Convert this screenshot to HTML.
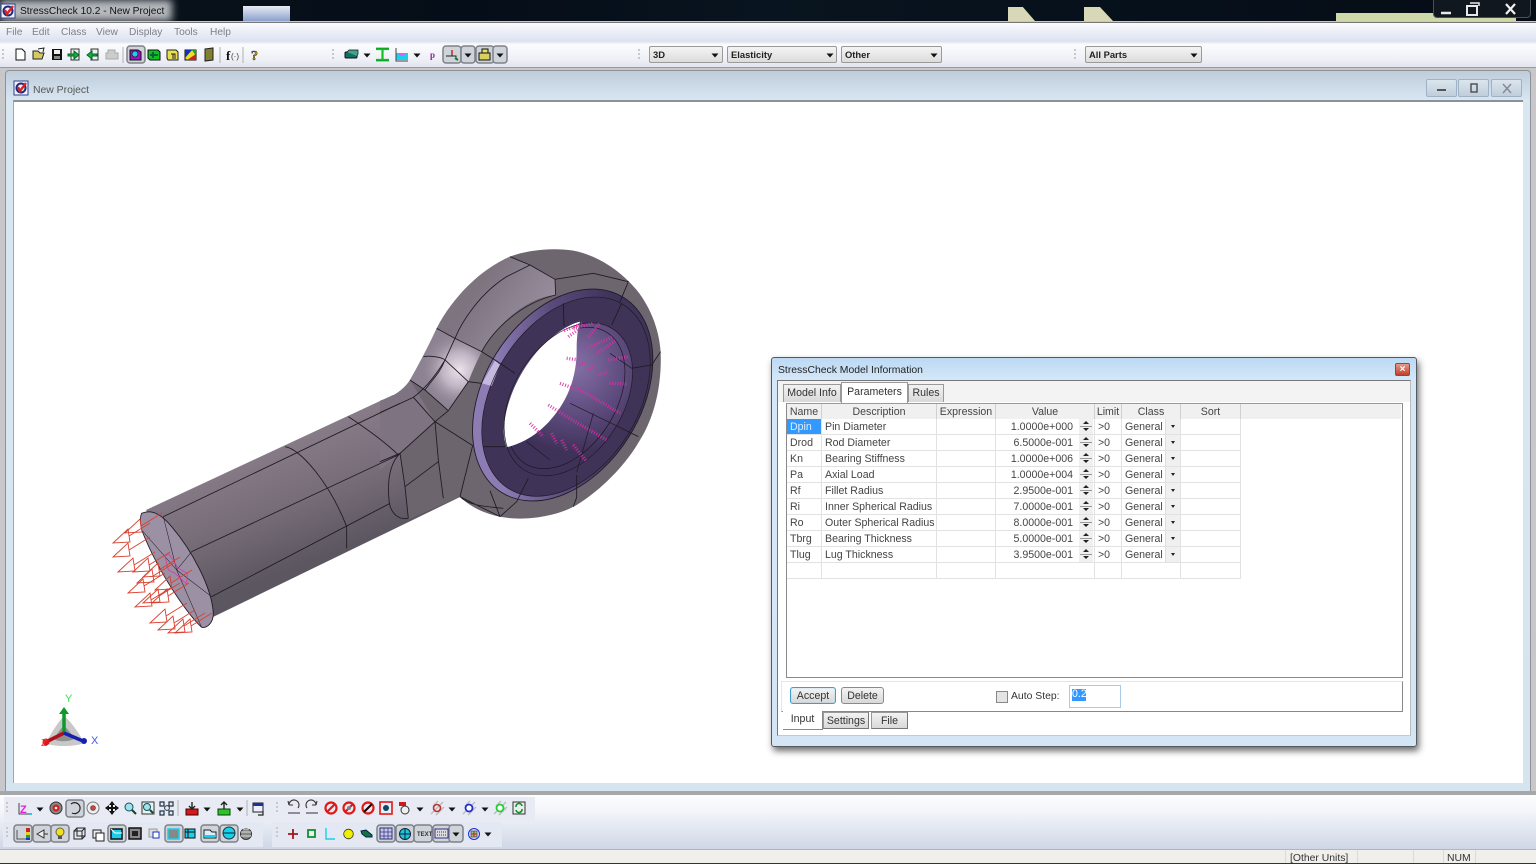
<!DOCTYPE html>
<html lang="en">
<head>
<meta charset="utf-8">
<title>StressCheck 10.2 - New Project</title>
<style>
html,body{margin:0;padding:0;background:#c8c8ca}
body{width:1536px;height:864px;overflow:hidden;position:relative;font-family:"Liberation Sans",sans-serif;font-size:11px;color:#333}
#root{position:absolute;left:0;top:0;width:1536px;height:864px;overflow:hidden;filter:blur(.35px)}
.a{position:absolute}
#top{left:0;top:0;width:1536px;height:21px;background:linear-gradient(90deg,#0a121c,#050d18 30%,#08141f 50%,#050c16)}
#menu{left:0;top:22px;width:1536px;height:20px;background:linear-gradient(#fbfcfe 0,#f2f4fa 25%,#dce1f0 100%);border-top:1px solid #777;box-sizing:border-box}
#menu span{position:absolute;top:3.500px;color:#7f8288;font-size:10.2px}
#tb{left:0;top:42px;width:1536px;height:26px;background:linear-gradient(#e6e8ee 0,#fbfcfe 10%,#eef0f6 70%,#e2e5ee 100%);border-bottom:1px solid #9a9a9a;box-sizing:border-box}
.dd{position:absolute;top:46px;height:17px;box-sizing:border-box;border:1px solid #9a9a9a;border-radius:2px;background:linear-gradient(#f4f4f4,#dcdcdc);font-weight:bold;font-size:9.4px;color:#222;line-height:16px;padding-left:3px}
#mdi{left:5px;top:70px;width:1526px;height:723px;box-sizing:border-box;border-radius:4px 4px 0 0;border:1px solid #8e9296;background:linear-gradient(#bfccda 0,#d9e7f3 30px,#d6e4f0 100%)}
#cv{left:13px;top:100px;width:1510px;height:683px;background:#fff;border-top:2px solid #8b9196;border-left:1px solid #9aa;box-sizing:border-box}
.mb{position:absolute;top:79px;height:18px;width:31px;box-sizing:border-box;border:1px solid #9fb2c6;border-radius:2px;background:linear-gradient(#dbe5ee,#c0cedb)}
#bt{left:0;top:795px;width:1536px;height:54px;background:linear-gradient(#fdfdfe 0,#f3f5fa 30%,#cfd6e6 100%)}
#st{left:0;top:849px;width:1536px;height:14px;background:#f1efeb;border-top:1px solid #b5b5b5;box-sizing:border-box}
#st i{position:absolute;top:0;bottom:0;width:1px;background:#dcdad5}
#st span{position:absolute;top:3px;font-size:10.4px;color:#333;white-space:nowrap}
#dlg{left:771px;top:357px;width:646px;height:390px;box-sizing:border-box;border:1px solid #55595e;border-radius:3px;background:linear-gradient(#bcd9f3 0,#d4e7f8 22px,#d4e6f6 100%);box-shadow:2px 4px 7px rgba(30,30,30,.65)}
#dt{left:6px;top:7px;font-size:10.4px;color:#222}
#dx{left:623px;top:5px;width:15px;height:13px;box-sizing:border-box;border:1px solid #8a4a40;border-radius:2px;background:linear-gradient(#e89a88,#c0402c);color:#fff;font-size:10px;line-height:11px;text-align:center;font-weight:bold}
#db{left:5px;top:22px;width:634px;height:356px;box-sizing:border-box;background:#f3f3f3;border:1px solid #777;border-bottom-color:#c8c8c8;border-right-color:#bbb}
#wp{left:0;top:21px;width:632px;height:333px;background:#fff}
.tab{position:absolute;box-sizing:border-box;background:linear-gradient(#f2f2f2,#d9d9d9);border:1px solid #999;text-align:center;color:#333;font-size:10.6px}
#grid{left:787px;top:404px;width:614px;height:272px;background:#fff}
#gf{left:786px;top:403px;width:617px;height:275px;box-sizing:border-box;border:1px solid #8a8a8a;border-top-color:#999}
table{border-collapse:separate;border-spacing:0;table-layout:fixed;width:454px}
th,td{box-sizing:border-box;height:16px;padding:2px 0 0;border-right:1px solid #e2e2e2;border-bottom:1px solid #e2e2e2;font-weight:normal;font-size:10.6px;white-space:nowrap;overflow:hidden;color:#444;position:relative;line-height:13px}
th{background:#f0f0f0;text-align:center;border-right:1px solid #d0d0d0;border-bottom:0;height:15px;color:#444}
td{padding-left:3px}
td.v{padding:2px 21px 0 0;text-align:right}
.sp{position:absolute;right:1px;top:0;width:14px;height:15px;background:#f0f0f0}
.sp:before{content:"";position:absolute;left:4px;top:2px;border:3px solid transparent;border-top:0;border-bottom:3px solid #222}
.sp:after{content:"";position:absolute;left:4px;top:9px;border:3px solid transparent;border-bottom:0;border-top:3px solid #222}
.sp b{position:absolute;left:1px;right:1px;top:7px;height:1px;background:#999}
.cb{position:absolute;right:0;top:0;width:15px;height:15px;background:#f0f0f0;border-left:1px solid #ddd;box-sizing:border-box}
.cb:after{content:"";position:absolute;left:5px;top:6px;border:2.5px solid transparent;border-bottom:0;border-top:3px solid #222}
#hx{left:1241px;top:404px;width:160px;height:15px;background:#f0f0f0}
#box{left:781px;top:681px;width:622px;height:31px;box-sizing:border-box;border:1px solid #e6e6e6;border-right:1px solid #888;border-bottom:1px solid #888}
.btn{position:absolute;box-sizing:border-box;top:687px;height:17px;border:1px solid #8a8a8a;border-radius:3px;background:linear-gradient(#f4f4f4,#d8d8d8);text-align:center;line-height:16px;font-size:10.6px;color:#333}
</style>
</head>
<body>
<div id="root">
<div class="a" id="top"></div>
<div class="a" style="left:0;top:0;width:172px;height:21px;background:#d4d7da;filter:blur(4px);opacity:.85"></div>
<div class="a" style="left:243px;top:6px;width:47px;height:15px;background:linear-gradient(#e8ecf4,#8aa0cc);"></div>
<div class="a" style="left:1008px;top:7px;width:27px;height:14px;background:#d8d8b8;clip-path:polygon(0 0,55% 0,100% 100%,0 100%)"></div>
<div class="a" style="left:1084px;top:7px;width:29px;height:14px;background:#d8d8b8;clip-path:polygon(0 0,55% 0,100% 100%,0 100%)"></div>
<div class="a" style="left:1336px;top:13px;width:180px;height:8px;background:#cfd8a8"></div>
<div class="a" style="left:1433px;top:-1px;width:98px;height:19px;box-sizing:border-box;border:1px solid #4a5058;border-radius:0 0 4px 4px;background:#10171f"></div>
<div class="a" style="left:20px;top:6px;font-size:10.2px;color:#111;white-space:nowrap">StressCheck 10.2 - New Project</div>
<div class="a" id="menu">
<span style="left:6px">File</span><span style="left:32px">Edit</span><span style="left:61px">Class</span><span style="left:96px">View</span><span style="left:129px">Display</span><span style="left:174px">Tools</span><span style="left:210px">Help</span>
</div>
<div class="a" id="tb"></div>
<div class="dd" style="left:649px;width:74px">3D</div>
<div class="dd" style="left:727px;width:110px">Elasticity</div>
<div class="dd" style="left:841px;width:101px">Other</div>
<div class="dd" style="left:1085px;width:117px">All Parts</div>

<div class="a" id="mdi"></div>
<div class="a" style="left:33px;top:85px;font-size:10.4px;color:#555">New Project</div>
<div class="mb" style="left:1426px"></div><div class="mb" style="left:1458px"></div><div class="mb" style="left:1491px"></div>
<div class="a" id="cv"></div>
<div class="a" style="left:0;top:791px;width:1536px;height:4px;background:#a5a7a9"></div>
<div class="a" id="bt"></div>
<div class="a" style="left:4px;top:797px;width:531px;height:24px;background:#e8ebf4"></div>
<div class="a" style="left:3px;top:822px;width:260px;height:25px;background:#e4e8f2"></div>
<div class="a" style="left:272px;top:822px;width:230px;height:25px;background:#e4e8f2"></div>
<div class="a" id="st">
<i style="left:1285px"></i><i style="left:1357px"></i><i style="left:1413px"></i><i style="left:1443px"></i><i style="left:1475px"></i>
<span style="left:1290px">[Other Units]</span><span style="left:1447px">NUM</span>
</div>
<div class="a" style="left:0;top:863px;width:1536px;height:1px;background:#333"></div>

<!-- Graphics layer: model, triad and toolbar icons -->
<svg class="a" style="left:0;top:0" width="1536" height="864" viewBox="0 0 1536 864" xmlns="http://www.w3.org/2000/svg">
<defs>
<linearGradient id="rod" gradientUnits="userSpaceOnUse" x1="240" y1="440" x2="290" y2="570"><stop offset="0" stop-color="#8b808c"/><stop offset=".55" stop-color="#776d79"/><stop offset="1" stop-color="#5c5660"/></linearGradient>
<linearGradient id="band" gradientUnits="userSpaceOnUse" x1="330" y1="90" x2="520" y2="220"><stop offset="0" stop-color="#7d7480"/><stop offset="1" stop-color="#9b90a0"/></linearGradient>
<radialGradient id="hi" gradientUnits="userSpaceOnUse" cx="238" cy="390" r="120"><stop offset="0" stop-color="#ece3ec"/><stop offset=".45" stop-color="#bdb2c1"/><stop offset="1" stop-color="#8a7f8e" stop-opacity="0"/></radialGradient>
<radialGradient id="cyl" gradientUnits="userSpaceOnUse" cx="660" cy="440" r="260"><stop offset="0" stop-color="#8670a6"/><stop offset=".6" stop-color="#5c4a7c"/><stop offset="1" stop-color="#3f3259"/></radialGradient>
<linearGradient id="lip" gradientUnits="userSpaceOnUse" x1="300" y1="400" x2="520" y2="700"><stop offset="0" stop-color="#8d7cb4"/><stop offset=".5" stop-color="#5a4a7c"/><stop offset="1" stop-color="#3e3358"/></linearGradient>
<g id="arr" fill="none" stroke="#d9402f" stroke-width=".9"><path d="M0 0L15-14 17-1Z"/><path d="M16-7L37-20"/></g>
<g id="dn"><path d="M-3.5-1.5H3.5L0 2.5Z" fill="#111"/></g>
<g id="no" fill="none" stroke="#e01818" stroke-width="2.2"><circle r="5.5"/><path d="M-4 4L4-4"/></g>
</defs>

<!-- Rod and neck -->
<path d="M146 510L393 395 470 440 460 497 213 617 203 627Z" fill="url(#rod)"/>
<g transform="translate(380,240) scale(.33333)">
<path d="M0 482C40 470 70 450 90 420L205 512 165 545 60 640 0 690Z" fill="#7e7381"/>
<!-- Lug body -->
<path d="M90 420C110 385 140 330 170 265C220 170 300 90 390 50C440 30 520 22 580 32C650 45 720 90 770 150C815 205 840 280 842 340C845 420 830 520 780 600C740 670 670 745 590 795C530 830 430 845 360 830C310 820 270 800 240 770L165 545Z" fill="#6d666f"/>
<path d="M170 265C220 170 300 90 390 50L450 75 525 118 527 165C450 170 360 240 305 335L225 295Z" fill="url(#band)"/>
<path d="M170 265L305 335C285 375 275 400 265 425L205 512C175 480 135 450 90 420C110 385 140 330 170 265Z" fill="#8d8291"/>
<path d="M170 265L305 335C285 375 275 400 265 425L205 512C175 480 135 450 90 420C110 385 140 330 170 265Z" fill="url(#hi)"/>
<path d="M60 640L165 545 205 512 265 425 305 430 278 615 240 770 85 838 75 740Z" fill="#6c656e"/>
<!-- Bearing rings -->
<ellipse cx="548" cy="465" rx="345" ry="235" transform="rotate(-58 548 465)" fill="url(#lip)"/>
<ellipse cx="558" cy="470" rx="325" ry="218" transform="rotate(-58 558 470)" fill="#3f3358"/>
<ellipse cx="565" cy="478" rx="250" ry="165" transform="rotate(-58 565 478)" fill="url(#cyl)"/>
<g fill="none" stroke="#1f1a24" stroke-width="2.2">
<path d="M570 490L715 560M440 605L510 660M640 520L590 697M690 340L755 385"/>
<ellipse cx="558" cy="474" rx="232" ry="150" transform="rotate(-58 558 474)"/>
</g>
<path d="M372 560C378 480 420 390 480 325C520 285 560 255 600 245C592 270 590 300 590 330C590 400 570 470 520 530C480 580 430 610 380 622C372 600 370 580 372 560Z" fill="#fff"/>
<path d="M345 362L360 375 335 438 306 430Z" fill="#c6b9e0"/>
<!-- Mesh lines -->
<g fill="none" stroke="#1f1a24" stroke-width="2.6">
<path d="M0 518L100 472C130 450 165 410 195 360L225 295C245 245 300 160 380 110L450 75 525 118 640 100 745 125 720 185"/>
<path d="M390 50L450 75M525 118L527 165M305 335C340 270 420 190 527 165M170 265L225 295 305 335 345 360"/>
<path d="M130 350C160 345 190 355 195 360L265 425 305 430M90 420L135 450 205 512M135 450C155 420 180 400 195 360"/>
<path d="M100 472L165 545M0 665L60 640 165 545 175 660 190 775M60 640C30 670 20 720 28 790C35 825 60 840 85 835M60 640L75 740 85 835M165 545L205 512 265 425M165 545L278 617M175 665L75 740M278 617L240 770M240 770C270 800 330 800 370 805M240 770L360 830M330 752L360 830"/>
<ellipse cx="548" cy="465" rx="345" ry="235" transform="rotate(-58 548 465)"/>
<ellipse cx="558" cy="470" rx="325" ry="218" transform="rotate(-58 558 470)" stroke-width="2"/>
<ellipse cx="565" cy="478" rx="250" ry="165" transform="rotate(-58 565 478)" stroke-width="2"/>
<path d="M550 190L552 258M725 190L695 255M815 375L755 385M775 590L715 560M590 705L590 772M445 715L410 785M375 620L310 620M345 360L405 400M410 785L360 830M590 772L580 800M815 375L842 335"/>
</g>
<g fill="none" stroke="#dc2fa6" stroke-width="10" stroke-dasharray="3 5" opacity=".9">
<path d="M552 272L610 250M565 290L600 265M580 265L640 250M625 290L660 250M620 325L700 290M650 340L710 300M685 360L745 350"/>
<path d="M560 355L600 360M590 375L615 370M622 388L650 380M655 405L685 395M688 430L742 432"/>
<path d="M540 430L610 455 720 520"/><path d="M505 495L560 530 680 600"/>
<path d="M450 550L490 590M515 580L530 610M545 600L560 630M580 615L620 665"/>
</g>
</g>

<!-- Face of the rod, mesh lines and load arrows -->
<g transform="translate(100,240) scale(.33333)">
<path d="M125 820C160 805 190 830 215 860C275 930 335 1040 340 1120C340 1150 320 1165 305 1162C270 1130 180 1010 125 870C120 850 120 830 125 820Z" fill="#9c91a4"/>
<g fill="none" stroke="#1f1a24" stroke-width="2.6">
<path d="M125 820C160 805 190 830 215 860C275 930 335 1040 340 1120C340 1150 320 1165 305 1162C270 1130 180 1010 125 870C120 850 120 830 125 820Z"/>
<path d="M190 830L900 490M275 935L895 645M335 1070L870 790M555 620C600 625 690 730 740 860L740 925M745 530C775 550 850 600 895 645"/>
<path d="M190 830L230 990 305 1162M275 935L230 990M335 1070L230 990M125 870L230 990" stroke-width="1.6"/>
</g>
<path d="M205 940L235 985 262 1000 260 1032 225 1000 205 990 195 950Z" fill="none" stroke="#d838a8" stroke-width="2.5"/>
</g>
<g>
<use href="#arr" x="113" y="543"/><use href="#arr" x="125" y="533"/><use href="#arr" x="113" y="557"/><use href="#arr" x="118" y="572"/><use href="#arr" x="133" y="572"/><use href="#arr" x="128" y="593"/><use href="#arr" x="137" y="583"/><use href="#arr" x="135" y="607"/><use href="#arr" x="143" y="603"/><use href="#arr" x="152" y="603"/><use href="#arr" x="150" y="623"/><use href="#arr" x="158" y="630"/><use href="#arr" x="168" y="633"/><use href="#arr" x="175" y="633"/><use href="#arr" x="143" y="577"/><use href="#arr" x="155" y="590"/>
</g>

<!-- Triad -->
<path d="M64 716C72 722 82 738 84 743C75 747 52 747 46 743C50 735 58 722 64 716Z" fill="#c8c8c8"/>
<path d="M64 726C69 730 73 736 74 739C68 742 58 742 54 739C57 734 60 729 64 726Z" fill="#8f8f8f"/>
<path d="M64 733V712" stroke="#0c9a2c" stroke-width="3.5"/><path d="M64 707L69 714H59Z" fill="#0c9a2c"/>
<path d="M64 733L48 741" stroke="#b01018" stroke-width="3.5"/><circle cx="46" cy="742" r="3.5" fill="#d81a20"/>
<path d="M64 733L83 741" stroke="#1420b0" stroke-width="3.5"/><circle cx="84" cy="741" r="3" fill="#1420b0"/>
<text x="65" y="702" font-family="Liberation Sans" font-size="11" fill="#3be060">Y</text>
<text x="91" y="744" font-family="Liberation Sans" font-size="11" fill="#4a5ae8">X</text>
<text x="41" y="746" font-family="Liberation Sans" font-size="10" fill="#ff3030">Z</text>

<!-- App and child window icons -->
<g transform="translate(8,11)"><rect x="-7" y="-7" width="14" height="14" fill="#f0f3fa" stroke="#2f3f8f"/><circle r="4.5" fill="none" stroke="#1d2a7a" stroke-width="2"/><path d="M-3-1L-1 3 5-5" fill="none" stroke="#e02020" stroke-width="2.4"/></g>
<g transform="translate(21,88)"><rect x="-7" y="-7" width="14" height="14" fill="#f0f3fa" stroke="#2f3f8f"/><circle r="4.5" fill="none" stroke="#1d2a7a" stroke-width="2"/><path d="M-3-1L-1 3 5-5" fill="none" stroke="#e02020" stroke-width="2.4"/></g>

<!-- Window controls -->
<path d="M1441 13H1451" stroke="#e8e8e8" stroke-width="2.5"/>
<path d="M1467 6H1477V15H1467Z" fill="none" stroke="#e8e8e8" stroke-width="2"/><path d="M1470 3H1479V6" fill="none" stroke="#e8e8e8" stroke-width="1.5"/>
<path d="M1506 4L1515 14M1515 4L1506 14" stroke="#f0f0f0" stroke-width="2.2"/>
<path d="M1437 90H1446" stroke="#555" stroke-width="2"/><rect x="1471" y="84" width="6" height="8" fill="none" stroke="#555" stroke-width="1.5"/><path d="M1503 84L1511 93M1511 84L1503 93" stroke="#889" stroke-width="1.5"/>

<!-- Dropdown arrows top -->
<use href="#dn" x="715" y="55"/><use href="#dn" x="830" y="55"/><use href="#dn" x="934" y="55"/><use href="#dn" x="1194" y="55"/>

<!-- Toolbar grips -->
<g fill="#c8c8c8"><path d="M2 49h2v2H2zM2 53h2v2H2zM2 57h2v2H2zM332 49h2v2h-2zM332 53h2v2h-2zM332 57h2v2h-2zM638 49h2v2h-2zM638 53h2v2h-2zM638 57h2v2h-2zM1074 49h2v2h-2zM1074 53h2v2h-2zM1074 57h2v2h-2z"/>
<path d="M6 802h2v2H6zM6 806h2v2H6zM6 810h2v2H6zM6 827h2v2H6zM6 831h2v2H6zM6 835h2v2H6zM276 802h2v2h-2zM276 806h2v2h-2zM276 810h2v2h-2zM276 827h2v2h-2zM276 831h2v2h-2zM276 835h2v2h-2z"/></g>

<!-- Top toolbar icons -->
<path d="M16 49H22L25 52V60H16Z" fill="#fff" stroke="#111"/>
<path d="M33 59V51H38L40 53H44L42 59Z" fill="#d8c860" stroke="#222"/><path d="M38 49L44 48 43 52" fill="none" stroke="#222"/>
<rect x="52" y="49" width="10" height="11" fill="#111"/><rect x="54" y="50" width="6" height="4" fill="#eee"/><rect x="54" y="56" width="6" height="3" fill="#888"/>
<path d="M71 49H79V60H71Z" fill="#eee" stroke="#333"/><path d="M68 54H74V51L79 55 74 59V56H68Z" fill="#18b030" stroke="#063"/>
<path d="M91 49H98V60H91Z" fill="#eee" stroke="#333"/><path d="M97 54H92V51L87 55 92 59V56H97Z" fill="#18b030" stroke="#063"/>
<path d="M108 50H115V53H118V59H106V53H108Z" fill="#ccc" stroke="#aaa"/>
<path d="M123 47V63M220 47V63M243 47V63" stroke="#b0b0b0"/>
<rect x="127" y="46" width="18" height="17" rx="3" fill="#cfd3da" stroke="#7e8288" stroke-width="1.5"/>
<path d="M130 50H138L141 52V60H130Z" fill="#a010c0" stroke="#111"/><circle cx="135" cy="54" r="3" fill="#18d0e8" stroke="#111" stroke-width=".6"/>
<path d="M148 50H158L160 52V60H150L148 58Z" fill="#10c020" stroke="#111"/><path d="M153 52V58M150 55H158" stroke="#063" stroke-width="2"/>
<path d="M167 50H176L178 52V60H168L167 58Z" fill="#e8e050" stroke="#222"/><path d="M171 54H175V59M173 54V59" stroke="#222" fill="none"/>
<path d="M185 50H196V60H185Z" fill="#e8e020" stroke="#111"/><path d="M185 50H192L185 58Z" fill="#1030c0"/><path d="M192 50H196V56Z" fill="#20a030"/><path d="M187 60L196 54V60Z" fill="#d02020"/>
<path d="M205 49L213 48V60L205 61Z" fill="#808030" stroke="#222"/>
<text x="226" y="60" font-family="Liberation Serif" font-weight="bold" font-size="13" fill="#111">f</text><text x="231" y="59" font-family="Liberation Sans" font-size="8" fill="#333">(·)</text>
<text x="251" y="60" font-family="Liberation Serif" font-weight="bold" font-size="14" fill="#c8b000" stroke="#222" stroke-width=".5">?</text>
<rect x="345" y="52" width="12" height="6" rx="1" fill="#0f6f60" stroke="#111"/><path d="M347 52L349 50H358V54L357 56" fill="#48a090" stroke="#111" stroke-width=".7"/>
<use href="#dn" x="367" y="55"/>
<path d="M376 49H389M376 60H389M382.5 49V60" stroke="#10c020" stroke-width="2.2"/><path d="M376 48H389M376 61H389" stroke="#063" stroke-width=".6"/>
<rect x="396" y="53" width="12" height="7" fill="#18d0f0"/><path d="M396 53H408L402 56Z" fill="#e060e0"/><path d="M396 48V61H408" fill="none" stroke="#444"/>
<use href="#dn" x="417" y="55"/>
<text x="430" y="58" font-family="Liberation Serif" font-weight="bold" font-size="9" fill="#9020a0">p</text>
<rect x="443" y="46" width="18" height="17" rx="3" fill="#cfd3da" stroke="#7e8288" stroke-width="1.5"/><rect x="461" y="46" width="14" height="17" rx="3" fill="#cfd3da" stroke="#7e8288" stroke-width="1.5"/>
<path d="M446 56H456V59M452 50V56" stroke="#222" fill="none"/><path d="M452 50V54" stroke="#e01818" stroke-width="1.5"/><path d="M455 58L458 60" stroke="#108020" stroke-width="2"/><use href="#dn" x="468" y="55"/>
<rect x="476" y="46" width="18" height="17" rx="3" fill="#cfd3da" stroke="#7e8288" stroke-width="1.5"/><rect x="493" y="46" width="14" height="17" rx="3" fill="#cfd3da" stroke="#7e8288" stroke-width="1.5"/>
<path d="M479 53H490V60H479Z" fill="#d8d060" stroke="#111"/><path d="M482 49H488V53H482Z" fill="#e8e060" stroke="#111"/><use href="#dn" x="500" y="55"/>

<!-- Bottom row 1 -->
<path d="M19 803V814H29" fill="none" stroke="#444"/><text x="20" y="813" font-family="Liberation Sans" font-weight="bold" font-size="11" fill="#e020e0">Z</text><path d="M29 814h3" stroke="#18d0e8" stroke-width="2"/>
<use href="#dn" x="40" y="809"/>
<circle cx="56" cy="808" r="6" fill="#888" stroke="#333"/><circle cx="56" cy="808" r="3.5" fill="#d02020"/><circle cx="56" cy="808" r="1.3" fill="#eee"/>
<rect x="66" y="800" width="18" height="17" rx="3" fill="#cfd3da" stroke="#7e8288" stroke-width="1.5"/><path d="M71 804A5.5 5.5 0 1 1 72 813" fill="none" stroke="#222" stroke-width="1.2"/>
<circle cx="93" cy="808" r="6" fill="#eee" stroke="#777"/><circle cx="93" cy="808" r="2.5" fill="#d04040" stroke="#444" stroke-width=".6"/>
<path d="M112 801L115 805H113V807H115V805L119 808 115 811V809H113V811H115L112 815 109 811H111V809H109V811L105 808 109 805V807H111V805H109Z" fill="#111"/>
<circle cx="129" cy="807" r="4" fill="#a0e0f0" stroke="#155"/><path d="M132 810L136 814" stroke="#143" stroke-width="2"/>
<rect x="142" y="802" width="12" height="12" fill="#e8f4f0" stroke="#333"/><circle cx="147" cy="807" r="3.5" fill="#a0e0f0" stroke="#155"/><path d="M150 810L153 813" stroke="#143" stroke-width="2"/>
<path d="M160 802h4v4h-4zM169 802h4v4h-4zM160 811h4v4h-4zM169 811h4v4h-4z" fill="none" stroke="#234" stroke-width="1.2"/><circle cx="167" cy="808" r="2.4" fill="none" stroke="#234"/>
<path d="M178 800V816M247 800V816" stroke="#b0b0b0"/>
<path d="M186 809H198V815H186Z" fill="#d81818" stroke="#400"/><path d="M192 802V808M189 806L192 809 195 806" fill="none" stroke="#222" stroke-width="1.4"/>
<use href="#dn" x="207" y="809"/>
<path d="M218 809H230V815H218Z" fill="#30c030" stroke="#040"/><path d="M224 803V809M221 805L224 802 227 805" fill="none" stroke="#222" stroke-width="1.4"/>
<use href="#dn" x="240" y="809"/>
<rect x="253" y="803" width="10" height="9" fill="#eef" stroke="#222"/><rect x="253" y="803" width="10" height="3" fill="#1830a0"/><path d="M258 815H263V811" fill="none" stroke="#222" stroke-width="1.2"/>
<path d="M289 805A5 5 0 1 1 298 808M289 805L288 801M289 805L293 805M288 813H300" fill="none" stroke="#333" stroke-width="1.1"/>
<path d="M316 805A5 5 0 1 0 307 808M316 805L317 801M316 805L312 805M306 813H318" fill="none" stroke="#333" stroke-width="1.1"/>
<use href="#no" x="331" y="808"/><use href="#no" x="349" y="808"/><circle cx="349" cy="808" r="2" fill="#789"/><use href="#no" x="368" y="808"/><path d="M364 812L372 804" stroke="#111" stroke-width="2"/>
<rect x="380" y="802" width="12" height="12" fill="#e8eef4" stroke="#e01818" stroke-width="1.6"/><circle cx="386" cy="808" r="3" fill="#146"/><path d="M383 808h6M386 805v6" stroke="#146"/>
<rect x="399" y="802" width="7" height="4" fill="#d01818"/><circle cx="405" cy="810" r="4" fill="#eee" stroke="#333"/>
<use href="#dn" x="420" y="809"/>
<path d="M431 814L443 802M433 806L438 801M436 815L444 807" stroke="#bbb" stroke-width="1.4"/><circle cx="437" cy="808" r="3.5" fill="none" stroke="#c03030" stroke-width="1.6"/>
<use href="#dn" x="452" y="809"/>
<path d="M463 814L475 802M465 806L470 801M468 815L476 807" stroke="#bbb" stroke-width="1.4"/><circle cx="469" cy="808" r="3.5" fill="#fff" stroke="#1c30d0" stroke-width="1.8"/>
<use href="#dn" x="485" y="809"/>
<path d="M494 814L506 802M496 806L501 801M499 815L507 807" stroke="#bbb" stroke-width="1.4"/><circle cx="500" cy="808" r="3.5" fill="#fff" stroke="#20d030" stroke-width="1.8"/>
<rect x="513" y="802" width="12" height="12" fill="#e8f0e8" stroke="#333"/><path d="M516 807A3 3 0 0 1 522 806M522 809A3 3 0 0 1 516 810" fill="none" stroke="#109030" stroke-width="1.6"/>

<!-- Bottom row 2 -->
<g fill="#cfd3da" stroke="#7e8288" stroke-width="1.5">
<rect x="14" y="825" width="18" height="17" rx="3"/><rect x="33" y="825" width="18" height="17" rx="3"/><rect x="51" y="825" width="18" height="17" rx="3"/><rect x="108" y="825" width="18" height="17" rx="3"/><rect x="165" y="825" width="18" height="17" rx="3"/><rect x="201" y="825" width="18" height="17" rx="3"/><rect x="220" y="825" width="18" height="17" rx="3"/>
<rect x="377" y="825" width="18" height="17" rx="3"/><rect x="396" y="825" width="18" height="17" rx="3"/><rect x="414" y="825" width="18" height="17" rx="3"/><rect x="433" y="825" width="18" height="17" rx="3"/><rect x="449" y="825" width="14" height="17" rx="3"/>
</g>
<rect x="26" y="828" width="4" height="4" fill="#d02020"/><rect x="26" y="832" width="4" height="3" fill="#e0d020"/><rect x="26" y="835" width="4" height="3" fill="#20a030"/><rect x="26" y="838" width="4" height="2" fill="#2030c0"/><path d="M17 830V839H26" fill="none" stroke="#555"/>
<path d="M37 834L44 830V838Z" fill="#eee" stroke="#333"/><path d="M44 834H48" stroke="#333"/>
<circle cx="60" cy="832" r="4" fill="#f0e020" stroke="#664"/><rect x="58" y="836" width="4" height="3" fill="#555"/>
<path d="M74 831H82V839H74Z M77 828H85V836H77Z" fill="none" stroke="#222"/><path d="M74 831L77 828M82 831L85 828M82 839L85 836" stroke="#222"/>
<rect x="93" y="830" width="8" height="8" fill="#eee" stroke="#222"/><rect x="96" y="833" width="8" height="8" fill="#fff" stroke="#222"/>
<rect x="111" y="829" width="11" height="10" fill="#18d0e8" stroke="#111" stroke-width="1.5"/><path d="M111 829L115 833H122" fill="none" stroke="#fff"/>
<rect x="129" y="828" width="12" height="11" fill="#888" stroke="#111" stroke-width="1.5"/><rect x="132" y="831" width="6" height="5" fill="#222"/>
<rect x="149" y="829" width="8" height="8" fill="#ddd" stroke="#999"/><rect x="153" y="832" width="6" height="6" fill="#fff" stroke="#1830c0"/>
<rect x="168" y="829" width="11" height="10" fill="#888" stroke="#18d0e8" stroke-width="1.5"/>
<rect x="185" y="829" width="10" height="9" fill="#18d0e8" stroke="#111"/><path d="M188 829V838M185 832H195" stroke="#111"/>
<path d="M204 838V830H210L212 832H216V838Z" fill="#ddeeff" stroke="#222"/><path d="M204 836H216" stroke="#18d0e8" stroke-width="2"/>
<circle cx="229" cy="833" r="6" fill="#18d0e8" stroke="#234"/><path d="M223 833H235" stroke="#123"/>
<circle cx="246" cy="834" r="5.5" fill="#888" stroke="#333"/><path d="M241 832H251M241 836H251M243 829H249" stroke="#ddd"/>
<path d="M293 829V839M288 834H298" stroke="#a01818" stroke-width="1.8"/>
<rect x="308" y="830" width="7" height="7" fill="#eee" stroke="#109030" stroke-width="1.8"/>
<path d="M326 828V839H335" fill="none" stroke="#18d0e8" stroke-width="1.4"/>
<circle cx="348.500" cy="834" r="4.800" fill="#f0f000" stroke="#333" stroke-width=".8"/>
<path d="M361 831L366 830 372 835V837H366L362 834Z" fill="#147048" stroke="#024"/>
<rect x="380" y="828" width="12" height="11" fill="#c8c8e0" stroke="#30308a"/><path d="M384 828V839M388 828V839M380 832H392M380 836H392" stroke="#30308a" stroke-width=".7"/>
<circle cx="405" cy="834" r="5.500" fill="#18c8e0" stroke="#123"/><path d="M399 834H411M405 828V840" stroke="#123"/>
<text x="417" y="836" font-family="Liberation Sans" font-weight="bold" font-size="6" fill="#333">TEXT</text>
<rect x="435" y="829" width="13" height="9" fill="#ddd" stroke="#30308a"/><path d="M437 832H446M437 835H446" stroke="#30308a" stroke-dasharray="1 1"/>
<use href="#dn" x="456" y="834"/>
<circle cx="474" cy="834" r="5.500" fill="#d8d8ff" stroke="#2030d0"/><rect x="471" y="831" width="6" height="6" fill="#88c888" stroke="#333" stroke-width=".6"/><path d="M471 834H477M474 831V837" stroke="#c02020"/>
<use href="#dn" x="488" y="834"/>
</svg>

<!-- Dialog -->
<div class="a" id="dlg">
<div class="a" id="dt">StressCheck Model Information</div>
<div class="a" id="dx">×</div>
<div class="a" id="db"><div class="a" id="wp"></div></div>
</div>
<div class="tab" style="left:783px;top:384px;width:58px;height:18px;line-height:17px;border-bottom:0">Model Info</div>
<div class="tab" style="left:841px;top:382px;width:67px;height:21px;line-height:18px;background:#fff;border-bottom:0;z-index:2">Parameters</div>
<div class="tab" style="left:908px;top:384px;width:36px;height:18px;line-height:17px;border-bottom:0">Rules</div>
<div class="a" id="gf"></div>
<div class="a" id="grid"></div>
<div class="a" id="hx"></div>
<table class="a" style="left:787px;top:404px">
<colgroup><col style="width:35px"><col style="width:115px"><col style="width:59px"><col style="width:99px"><col style="width:27px"><col style="width:59px"><col style="width:60px"></colgroup>
<tr><th>Name</th><th>Description</th><th>Expression</th><th>Value</th><th>Limit</th><th>Class</th><th>Sort</th></tr>
<tr><td style="background:#3399ff;color:#dfefff">Dpin</td><td>Pin Diameter</td><td></td><td class="v">1.0000e+000<span class="sp"><b></b></span></td><td>&gt;0</td><td>General<span class="cb"></span></td><td></td></tr>
<tr><td>Drod</td><td>Rod Diameter</td><td></td><td class="v">6.5000e-001<span class="sp"><b></b></span></td><td>&gt;0</td><td>General<span class="cb"></span></td><td></td></tr>
<tr><td>Kn</td><td>Bearing Stiffness</td><td></td><td class="v">1.0000e+006<span class="sp"><b></b></span></td><td>&gt;0</td><td>General<span class="cb"></span></td><td></td></tr>
<tr><td>Pa</td><td>Axial Load</td><td></td><td class="v">1.0000e+004<span class="sp"><b></b></span></td><td>&gt;0</td><td>General<span class="cb"></span></td><td></td></tr>
<tr><td>Rf</td><td>Fillet Radius</td><td></td><td class="v">2.9500e-001<span class="sp"><b></b></span></td><td>&gt;0</td><td>General<span class="cb"></span></td><td></td></tr>
<tr><td>Ri</td><td>Inner Spherical Radius</td><td></td><td class="v">7.0000e-001<span class="sp"><b></b></span></td><td>&gt;0</td><td>General<span class="cb"></span></td><td></td></tr>
<tr><td>Ro</td><td>Outer Spherical Radius</td><td></td><td class="v">8.0000e-001<span class="sp"><b></b></span></td><td>&gt;0</td><td>General<span class="cb"></span></td><td></td></tr>
<tr><td>Tbrg</td><td>Bearing Thickness</td><td></td><td class="v">5.0000e-001<span class="sp"><b></b></span></td><td>&gt;0</td><td>General<span class="cb"></span></td><td></td></tr>
<tr><td>Tlug</td><td>Lug Thickness</td><td></td><td class="v">3.9500e-001<span class="sp"><b></b></span></td><td>&gt;0</td><td>General<span class="cb"></span></td><td></td></tr>
<tr><td></td><td></td><td></td><td></td><td></td><td></td><td></td></tr>
</table>
<div class="a" id="box"></div>
<div class="btn" style="left:790px;width:46px;border-color:#3c9fd0;box-shadow:inset 0 0 1px #7cc8ee">Accept</div>
<div class="btn" style="left:841px;width:43px">Delete</div>
<div class="a" style="left:996px;top:691px;width:12px;height:12px;box-sizing:border-box;border:1px solid #888;background:#e4e4e4"></div>
<div class="a" style="left:1011px;top:691px;font-size:10.4px;color:#333">Auto Step:</div>
<div class="a" style="left:1069px;top:685px;width:52px;height:23px;box-sizing:border-box;border:1px solid #a8cbe8;background:#fff"></div>
<div class="a" style="left:1072px;top:689px;width:14px;height:12px;background:#3399ff;color:#fff;font-size:10.6px;line-height:11px">0.2</div>
<div class="tab" style="left:783px;top:711px;width:40px;height:19px;line-height:17px;background:#fff;border:0;border-right:1px solid #888;border-bottom:1px solid #888">Input</div>
<div class="tab" style="left:823px;top:712px;width:46px;height:17px;line-height:16px;border-right-color:#777;border-bottom-color:#777">Settings</div>
<div class="tab" style="left:871px;top:712px;width:37px;height:17px;line-height:16px;border-right-color:#777;border-bottom-color:#777">File</div>
</div>
</body>
</html>
